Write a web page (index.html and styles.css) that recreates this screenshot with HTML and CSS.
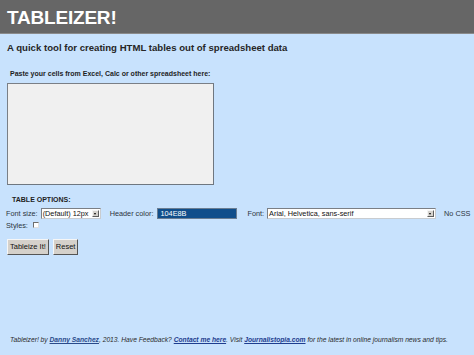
FILE: index.html
```html
<!DOCTYPE html>
<html>
<head>
<meta charset="utf-8">
<title>Tableizer</title>
<link rel="stylesheet" href="styles.css">
</head>
<body>
<header class="top"><h1 class="logo">TABLEIZER!</h1></header>
<main class="content">
  <h2 class="tagline">A quick tool for creating HTML tables out of spreadsheet data</h2>
  <p class="paste-label">Paste your cells from Excel, Calc or other spreadsheet here:</p>
  <textarea class="cells"></textarea>
  <p class="opts-label">TABLE OPTIONS:</p>
  <div class="opts-row">
    <span class="lbl">Font size:</span>
    <span class="sel sel-size"><span class="sel-text">(Default) 12px</span><span class="arrow"></span></span>
    <span class="lbl lbl-hc">Header color:</span>
    <span class="color-in">104E8B</span>
    <span class="lbl lbl-font">Font:</span>
    <span class="sel sel-font"><span class="sel-text">Arial, Helvetica, sans-serif</span><span class="arrow"></span></span>
    <span class="lbl lbl-nocss">No CSS</span>
  </div>
  <div class="styles-row"><span class="lbl">Styles:</span><span class="check"></span></div>
  <div class="buttons">
    <button class="btn">Tableize It!</button>
    <button class="btn">Reset</button>
  </div>
  <p class="footer">Tableizer! by <a href="#" class="lnk-plain">Danny Sanchez</a>, 2013. Have Feedback? <a href="#" class="lnk">Contact me here</a>. Visit <a href="#" class="lnk">Journalistopia.com</a> for the latest in online journalism news and tips.</p>
</main>
</body>
</html>
```
FILE: styles.css
```css
html, body {
  margin: 0;
  padding: 0;
}
body {
  background: #c8e2fd;
  font-family: "Liberation Sans", Arial, sans-serif;
  color: #2a2a2a;
  width: 474px;
  height: 355px;
  overflow: hidden;
}
.top {
  background: #666666;
  height: 33px;
  border-bottom: 1px solid #8a8a8a;
  display: flex;
  align-items: center;
  padding-left: 7px;
}
.logo {
  margin: 0;
  font-size: 19px;
  font-weight: bold;
  color: #ffffff;
  letter-spacing: -0.2px;
  line-height: 1;
  padding-top: 1px;
}
.content {
  padding: 0 7px;
  display: flex;
  flex-direction: column;
  align-items: flex-start;
}
.tagline {
  margin: 8px 0 0 0;
  font-size: 9.6px;
  line-height: 12px;
  font-weight: bold;
  color: #262626;
}
.paste-label {
  margin: 15px 0 0 3px;
  font-size: 7px;
  line-height: 9px;
  font-weight: bold;
  color: #1e1e1e;
}
.cells {
  margin: 5px 0 0 0;
  width: 207px;
  height: 102px;
  box-sizing: border-box;
  background: #f0f0f0;
  border: 1px solid #6f7780;
  border-top-color: #7a7f86;
  border-left-color: #7a7f86;
  resize: none;
  padding: 0;
}
.opts-label {
  margin: 10px 0 0 5px;
  font-size: 7px;
  line-height: 9px;
  font-weight: bold;
  color: #1e1e1e;
}
.opts-row {
  margin: 3px 0 0 -1px;
  display: flex;
  align-items: center;
  height: 12px;
  white-space: nowrap;
}
.lbl {
  font-size: 7.3px;
  color: #2c3540;
  white-space: nowrap;
  flex-shrink: 0;
}
.sel {
  position: relative;
  display: inline-flex;
  align-items: center;
  flex-shrink: 0;
  height: 11px;
  box-sizing: border-box;
  background: #ffffff;
  border: 1px solid #7b7f85;
  border-right-color: #c9ccd0;
  border-bottom-color: #c9ccd0;
  font-size: 7.3px;
  color: #111;
  padding-left: 1px;
  overflow: hidden;
  white-space: nowrap;
}
.sel-size {
  width: 60px;
  margin-left: 3px;
}
.sel-font {
  width: 169px;
  margin-left: 3px;
}
.arrow {
  position: absolute;
  right: 1px;
  top: 1px;
  width: 7px;
  height: 7px;
  background: #d6d3ce;
  border: 1px solid #f4f4f4;
  border-right-color: #5e5e5e;
  border-bottom-color: #5e5e5e;
  box-sizing: border-box;
}
.arrow::after {
  content: "";
  position: absolute;
  left: 1px;
  top: 2px;
  border-left: 1.5px solid transparent;
  border-right: 1.5px solid transparent;
  border-top: 2px solid #000;
}
.lbl-hc {
  margin-left: 9px;
}
.color-in {
  flex-shrink: 0;
  margin-left: 4px;
  width: 80px;
  height: 11px;
  box-sizing: border-box;
  background: #104e8b;
  border: 1px solid #6a7d92;
  color: #ffffff;
  font-size: 7.3px;
  line-height: 9px;
  padding-left: 2px;
}
.lbl-font {
  margin-left: 10px;
}
.lbl-nocss {
  margin-left: 8px;
}
.styles-row {
  margin: 1px 0 0 -1px;
  display: flex;
  align-items: center;
  height: 10px;
}
.check {
  margin-left: 5px;
  width: 6px;
  height: 6px;
  box-sizing: border-box;
  background: #fff;
  border: 1px solid #6d6d6d;
  border-right-color: #e0e0e0;
  border-bottom-color: #e0e0e0;
}
.buttons {
  margin-top: 9px;
  display: flex;
  gap: 4px;
}
.btn {
  font-family: "Liberation Sans", Arial, sans-serif;
  font-size: 7.5px;
  color: #111;
  background: #d5d1cb;
  border: 1px solid #f6f6f6;
  border-right-color: #555;
  border-bottom-color: #555;
  height: 16px;
  padding: 0 2px;
  margin: 0;
  line-height: 12px;
}
.footer {
  margin: 80px 0 0 3px;
  font-size: 6.7px;
  line-height: 9px;
  font-style: italic;
  color: #2a2a2a;
  white-space: nowrap;
}
.lnk, .lnk-plain {
  color: #1e3d8f;
  text-decoration: underline;
  font-weight: bold;
}
.lnk-plain {
  color: #2a4a8a;
}
```
